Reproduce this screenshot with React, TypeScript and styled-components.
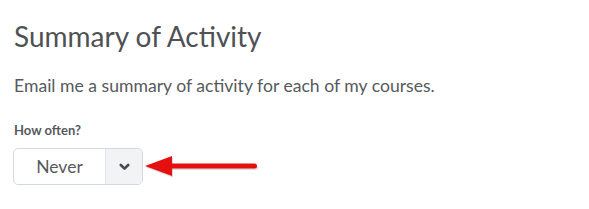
import styled, { createGlobalStyle } from 'styled-components';

const GlobalStyle = createGlobalStyle`
  body {
    margin: 0;
    background: #fff;
    font-family: Lato, "Open Sans", sans-serif;
    color: #565a5c;
  }
`

const Page = styled.div`
  padding: 20px 14px 0;
`

const Title = styled.h1`
  margin: 0;
  font-size: 28px;
  font-weight: 400;
  line-height: 1.2;
  color: #4f5254;
`

const Description = styled.p`
  margin: 21px 0 0;
  font-size: 17.6px;
  line-height: 1.2;
`

const Label = styled.div`
  margin-top: 27px;
  font-size: 13px;
  font-weight: 700;
  line-height: 1.2;
  color: #565a5c;
`

const Row = styled.div`
  display: flex;
  align-items: center;
  gap: 2px;
  margin-top: 10px;
  margin-left: -1px;
`

const Select = styled.div`
  display: flex;
  height: 37px;
  box-sizing: border-box;
  border: 1px solid #d3d9e3;
  border-radius: 5px;
  overflow: hidden;
`

const Value = styled.div`
  width: 91px;
  display: flex;
  align-items: center;
  justify-content: center;
  font-size: 17.5px;
  color: #565a5c;
`

const Toggle = styled.div`
  width: 36px;
  display: flex;
  align-items: center;
  justify-content: center;
  background: #f1f3f5;
  border-left: 1px solid #e3e6ea;
`

function Chevron() {
  return (
    <svg width="11" height="8" viewBox="0 0 11 8">
      <path d="M1.8 2 L5.5 5.6 L9.2 2" fill="none" stroke="#494c4e" strokeWidth="2.6" strokeLinecap="round" strokeLinejoin="round" />
    </svg>
  )
}

function Arrow() {
  return (
    <svg width="114" height="26" viewBox="0 0 114 26">
      <g fill="#9a9a9a" fillOpacity="0.35" transform="translate(1 1.5)">
        <rect x="24" y="9.5" width="88" height="5" rx="2.5" />
        <path d="M0 12 L27 2 L27 22 Z" />
      </g>
      <g fill="#e41010">
        <rect x="24" y="9.5" width="88" height="5" rx="2.5" />
        <path d="M0 12 L27 2 L27 22 Z" />
      </g>
    </svg>
  )
}

function App() {
  return (
    <Page>
      <GlobalStyle />
      <Title>Summary of Activity</Title>
      <Description>Email me a summary of activity for each of my courses.</Description>
      <Label>How often?</Label>
      <Row>
        <Select>
          <Value>Never</Value>
          <Toggle>
            <Chevron />
          </Toggle>
        </Select>
        <Arrow />
      </Row>
    </Page>
  );
}

export default App;
